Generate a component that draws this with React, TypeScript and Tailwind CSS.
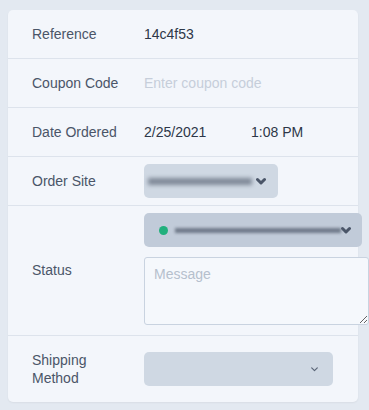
export default function App() {
  return (
    <div
      className="min-h-screen w-full overflow-hidden bg-[#e3e9f1] pt-[10px] pl-2 text-[14px]"
      style={{ fontFamily: '"Liberation Sans", Arial, sans-serif' }}
    >
      <div className="w-[350px] rounded-[5px] bg-[#f3f6fb] shadow-[0_1px_2px_rgba(0,0,0,0.05)]">
        <Row label="Reference">
          <span className="text-[#2d3748]">14c4f53</span>
        </Row>
        <Row label="Coupon Code">
          <input
            placeholder="Enter coupon code"
            className="w-[190px] bg-transparent text-[#2d3748] outline-none placeholder:text-[#c6ceda]"
          />
        </Row>
        <Row label="Date Ordered">
          <span className="w-[107px] text-[#2d3748]">2/25/2021</span>
          <span className="text-[#2d3748]">1:08 PM</span>
        </Row>
        <Row label="Order Site">
          <div className="flex h-[34px] w-[134px] items-center rounded-[5px] bg-[#cfd8e3] pl-1 pr-3">
            <div className="h-[7px] flex-1 bg-[#7f8998] blur-[2px]" />
            <Chevron className="ml-1 h-[10px] w-[10px] stroke-[#4a5568]" width={3} />
          </div>
        </Row>
        <div className="flex border-b border-[#dde3ec]">
          <div className="flex w-[136px] shrink-0 items-center pl-6 text-[#4a5568]">Status</div>
          <div className="flex flex-col pt-[7px] pb-[10px]">
            <div className="flex h-[34px] w-[218px] items-center rounded-[5px] bg-[#c1cbd9] pl-[15px] pr-[11px]">
              <span className="h-[9px] w-[9px] shrink-0 rounded-full bg-[#22b07d]" />
              <div className="ml-[7px] h-[5px] flex-1 bg-[#707a8a] blur-[1.5px]" />
              <Chevron className="ml-0 h-[10px] w-[10px] stroke-[#4a5568]" width={3} />
            </div>
            <textarea
              placeholder="Message"
              className="mt-[10px] h-[68px] w-[225px] rounded-[3px] border border-[#c9d3e0] bg-[#f5f8fc] px-[9px] py-[6px] text-[#2d3748] outline-none placeholder:text-[#b6c0cd]"
            />
          </div>
        </div>
        <div className="flex items-center py-[15px]">
          <div className="w-[96px] shrink-0 ml-6 mr-4 leading-[18px] text-[#4a5568]">Shipping Method</div>
          <div className="flex h-[34px] w-[189px] items-center justify-end rounded-[5px] bg-[#cfd8e3] pr-[14px]">
            <Chevron className="h-[8px] w-[9px] stroke-[#5a6577]" width={1.5} />
          </div>
        </div>
      </div>
    </div>
  );
}

function Row({ label, children }: { label: string; children: React.ReactNode }) {
  return (
    <div className="flex min-h-[49px] items-center border-b border-[#dde3ec] py-[7px]">
      <div className="w-[136px] shrink-0 pl-6 text-[#4a5568]">{label}</div>
      <div className="flex items-center">{children}</div>
    </div>
  );
}

function Chevron({ className, width }: { className: string; width: number }) {
  return (
    <svg viewBox="0 0 10 10" fill="none" className={className}>
      <path d="M1.5 3.5 L5 7 L8.5 3.5" strokeWidth={width} strokeLinecap="round" strokeLinejoin="round" />
    </svg>
  );
}
